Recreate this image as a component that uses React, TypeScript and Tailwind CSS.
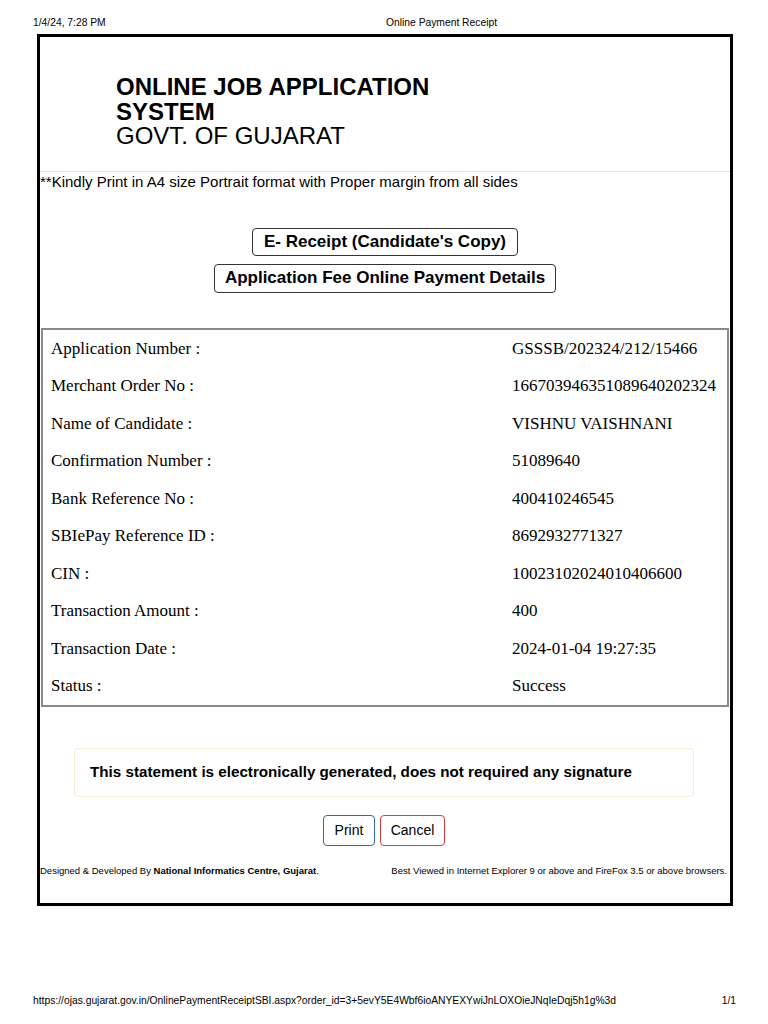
const rows: [string, string][] = [
  ['Application Number :', 'GSSSB/202324/212/15466'],
  ['Merchant Order No :', '166703946351089640202324'],
  ['Name of Candidate :', 'VISHNU VAISHNANI'],
  ['Confirmation Number :', '51089640'],
  ['Bank Reference No :', '400410246545'],
  ['SBIePay Reference ID :', '8692932771327'],
  ['CIN :', '10023102024010406600'],
  ['Transaction Amount :', '400'],
  ['Transaction Date :', '2024-01-04 19:27:35'],
  ['Status :', 'Success'],
];

export default function App() {
  return (
    <div className="w-[768px] h-[1024px] bg-white text-black font-['Liberation_Sans',Arial,sans-serif] flex flex-col">
      {/* print header */}
      <div className="flex items-center h-[18px] mt-[14px] pl-[33px] text-[10.3px] leading-none">
        <span className="w-[353px]">1/4/24, 7:28 PM</span>
        <span>Online Payment Receipt</span>
      </div>

      {/* page box */}
      <div className="ml-[37px] mt-[2px] w-[696px] h-[872px] border-[3px] border-black flex flex-col">
        <div className="pl-[76px] pt-[38px] pb-[22px] border-b border-[#e0e0e0] text-[24px] leading-[24.5px]">
          <div className="font-bold">ONLINE JOB APPLICATION</div>
          <div className="font-bold">SYSTEM</div>
          <div>GOVT. OF GUJARAT</div>
        </div>

        <div className="text-[15px] leading-[18px] mt-[1px]">
          **Kindly Print in A4 size Portrait format with Proper margin from all sides
        </div>

        <div className="flex flex-col items-center mt-[37px] gap-[8px]">
          <div className="h-[28px] px-[11px] flex items-center border border-[#333] rounded-[4px] text-[17px] font-bold">
            E- Receipt (Candidate's Copy)
          </div>
          <div className="h-[29px] px-[10px] flex items-center border border-[#333] rounded-[4px] text-[17px] font-bold">
            Application Fee Online Payment Details
          </div>
        </div>

        <div className="mt-[35px] ml-[1px] w-[688px] border-2 border-[#8a8a8a] font-['Liberation_Serif','Times_New_Roman',serif] text-[17px]">
          {rows.map(([label, value]) => (
            <div key={label} className="h-[37.5px] flex items-center">
              <div className="w-[469px] pl-[8px]">{label}</div>
              <div>{value}</div>
            </div>
          ))}
        </div>

        <div className="mt-[41px] ml-[34px] w-[620px] h-[49px] border border-[#faebcc] rounded-[4px] flex items-center pl-[15px] text-[15.2px] font-bold">
          This statement is electronically generated, does not required any signature
        </div>

        <div className="flex justify-center gap-[5px] mt-[18px] -ml-[2px]">
          <button className="h-[31px] w-[52px] border border-[#2e6da4] rounded-[4px] text-[14px] bg-white">
            Print
          </button>
          <button className="h-[31px] w-[65px] border border-[#d43f3a] rounded-[4px] text-[14px] bg-white">
            Cancel
          </button>
        </div>

        <div className="flex justify-between items-center mt-[19px] pr-[3px] text-[9.5px] leading-[12px]">
          <span>
            Designed &amp; Developed By <b>National Informatics Centre, Gujarat</b>.
          </span>
          <span>Best Viewed in Internet Explorer 9 or above and FireFox 3.5 or above browsers.</span>
        </div>
      </div>

      {/* print footer */}
      <div className="flex items-center justify-between mt-[90px] pl-[33px] pr-[32px] text-[10.3px] leading-none">
        <span>https://ojas.gujarat.gov.in/OnlinePaymentReceiptSBI.aspx?order_id=3+5evY5E4Wbf6ioANYEXYwiJnLOXOieJNqIeDqj5h1g%3d</span>
        <span>1/1</span>
      </div>
    </div>
  );
}
